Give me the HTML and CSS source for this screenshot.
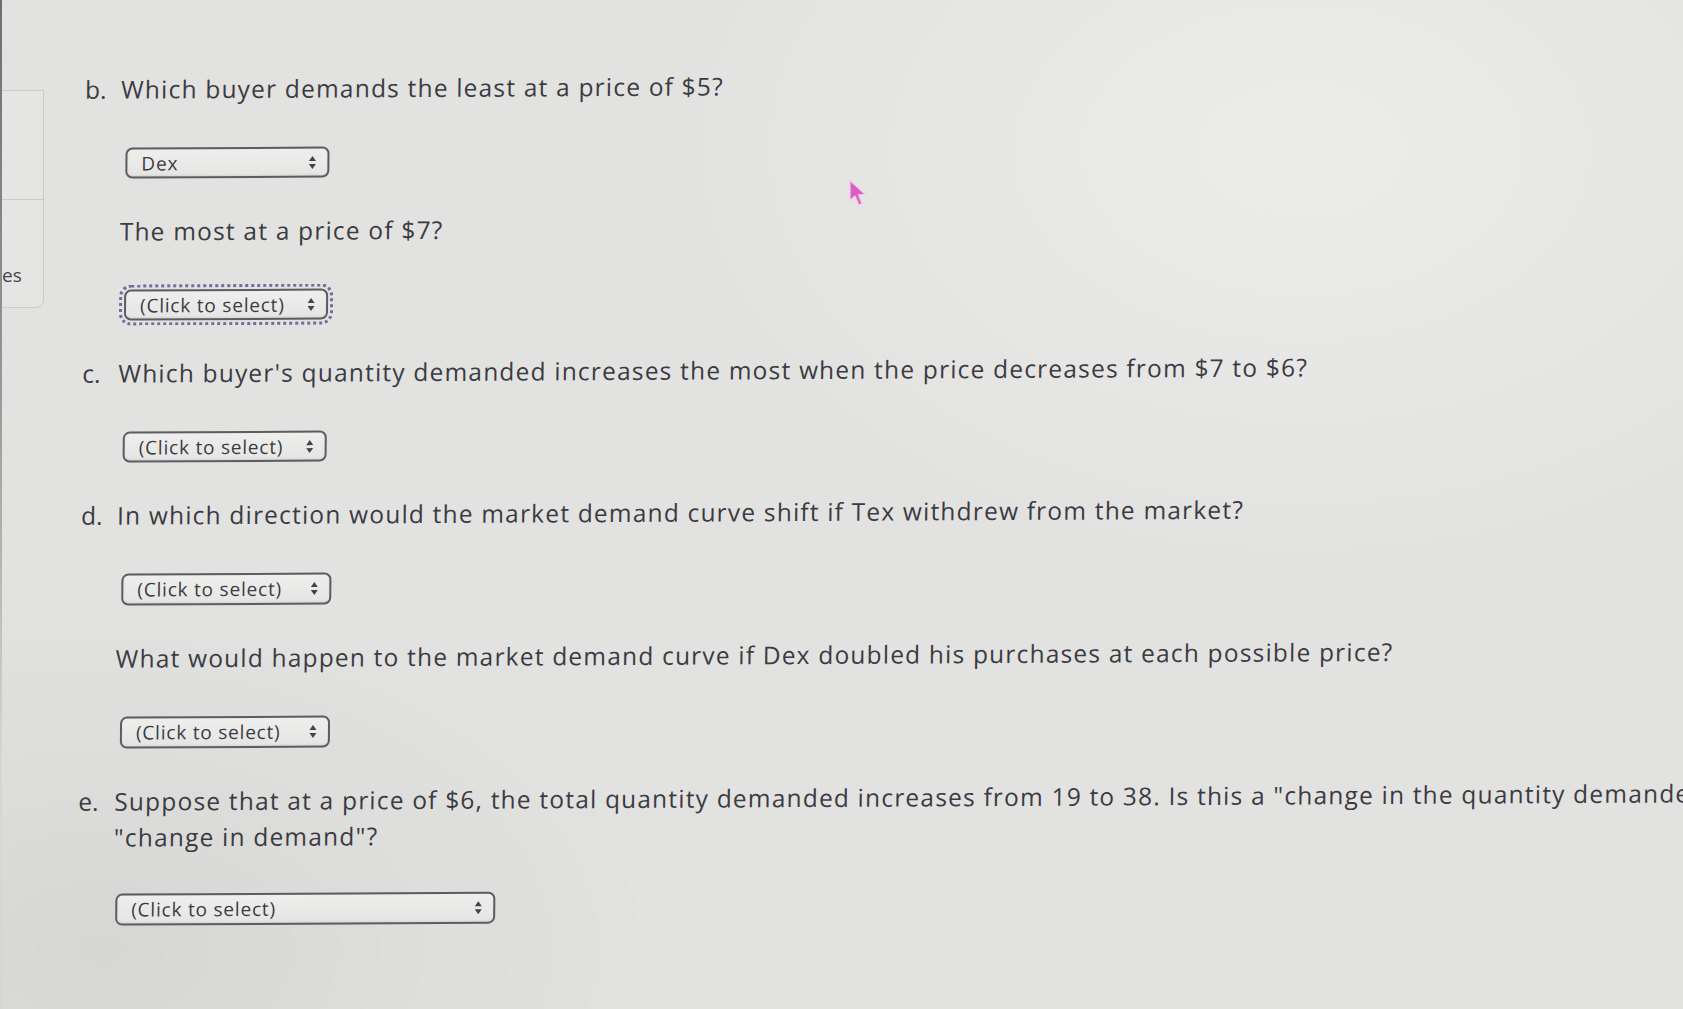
FILE: index.html
```html
<!DOCTYPE html>
<html>
<head>
<meta charset="utf-8">
<link rel="stylesheet" href="styles.css">
</head>
<body>
<div class="screen">
  <aside class="side">
    <div class="side-top"></div>
    <div class="side-bottom"><span class="side-text">es</span></div>
  </aside>
  <main class="main">
    <section class="q">
      <div class="q-row"><span class="q-label">b.</span><span class="q-text">Which buyer demands the least at a price of $5?</span></div>
      <div class="answer"><div class="select"><span class="select-value">Dex</span><span class="arrows"><svg viewBox="0 0 8 14" width="8" height="14"><path d="M4 0.5 L7.5 5.5 L0.5 5.5 Z M4 13.5 L7.5 8.5 L0.5 8.5 Z" fill="#43434f"/></svg></span></div></div>
      <div class="q-row"><span class="q-label"></span><span class="q-text">The most at a price of $7?</span></div>
      <div class="answer"><div class="select focused"><span class="select-value">(Click to select)</span><span class="arrows"><svg viewBox="0 0 8 14" width="8" height="14"><path d="M4 0.5 L7.5 5.5 L0.5 5.5 Z M4 13.5 L7.5 8.5 L0.5 8.5 Z" fill="#43434f"/></svg></span></div></div>
    </section>
    <section class="q">
      <div class="q-row"><span class="q-label">c.</span><span class="q-text">Which buyer's quantity demanded increases the most when the price decreases from $7 to $6?</span></div>
      <div class="answer"><div class="select"><span class="select-value">(Click to select)</span><span class="arrows"><svg viewBox="0 0 8 14" width="8" height="14"><path d="M4 0.5 L7.5 5.5 L0.5 5.5 Z M4 13.5 L7.5 8.5 L0.5 8.5 Z" fill="#43434f"/></svg></span></div></div>
    </section>
    <section class="q">
      <div class="q-row"><span class="q-label">d.</span><span class="q-text">In which direction would the market demand curve shift if Tex withdrew from the market?</span></div>
      <div class="answer"><div class="select medium"><span class="select-value">(Click to select)</span><span class="arrows"><svg viewBox="0 0 8 14" width="8" height="14"><path d="M4 0.5 L7.5 5.5 L0.5 5.5 Z M4 13.5 L7.5 8.5 L0.5 8.5 Z" fill="#43434f"/></svg></span></div></div>
      <div class="q-row"><span class="q-label"></span><span class="q-text">What would happen to the market demand curve if Dex doubled his purchases at each possible price?</span></div>
      <div class="answer"><div class="select medium"><span class="select-value">(Click to select)</span><span class="arrows"><svg viewBox="0 0 8 14" width="8" height="14"><path d="M4 0.5 L7.5 5.5 L0.5 5.5 Z M4 13.5 L7.5 8.5 L0.5 8.5 Z" fill="#43434f"/></svg></span></div></div>
    </section>
    <section class="q q-last">
      <div class="q-row"><span class="q-label">e.</span><span class="q-text">Suppose that at a price of $6, the total quantity demanded increases from 19 to 38. Is this a "change in the quantity demanded" or a<br>"change in demand"?</span></div>
      <div class="answer answer-last"><div class="select wide"><span class="select-value">(Click to select)</span><span class="arrows"><svg viewBox="0 0 8 14" width="8" height="14"><path d="M4 0.5 L7.5 5.5 L0.5 5.5 Z M4 13.5 L7.5 8.5 L0.5 8.5 Z" fill="#43434f"/></svg></span></div></div>
    </section>
  </main>
  <div class="cursor"><svg viewBox="0 0 16 24" width="20" height="30"><path d="M1.5 1 L1.5 17.5 L5.6 13.8 L8.6 21 L11.4 19.8 L8.5 12.8 L14 12.4 Z" fill="#d95ec6" stroke="#f2d0ea" stroke-width="1.2" stroke-linejoin="round"/></svg></div>
</div>
</body>
</html>
```

FILE: styles.css
```css
html, body {
  margin: 0;
  padding: 0;
  width: 1683px;
  height: 1009px;
  overflow: hidden;
}

body {
  background: #e3e3e1;
  font-family: "Open Sans", "Liberation Sans", sans-serif;
  color: #3b3b43;
}

.screen {
  position: relative;
  display: flex;
  width: 1683px;
  height: 1009px;
  overflow: hidden;
  background:
    radial-gradient(ellipse 900px 600px at 1300px 150px, rgba(255,255,255,0.35), rgba(255,255,255,0) 70%),
    radial-gradient(ellipse 800px 500px at 100px 950px, rgba(0,0,0,0.05), rgba(0,0,0,0) 70%),
    #e2e2e0;
  border-left: 2px solid #888;
  border-image: linear-gradient(#6e6e6e, #9a9a9a 40%, #d6d6d4 75%) 1;
  box-sizing: border-box;
}

.side {
  flex: 0 0 35px;
  margin-top: 90px;
  height: 216px;
  display: flex;
  flex-direction: column;
  border: 1px solid #cbcbc9;
  border-left: none;
  border-radius: 0 0 8px 0;
  background: rgba(255,255,255,0.12);
}

.side-top {
  height: 108px;
  border-bottom: 1px solid #cbcbc9;
}

.side-bottom {
  flex: 1;
  display: flex;
  justify-content: flex-end;
  padding-right: 21px;
  padding-top: 65px;
  overflow: hidden;
}

.side-text {
  font-size: 19px;
  line-height: 20px;
  color: #46464c;
}

.main {
  flex: 1;
  padding-left: 42px;
  padding-top: 72px;
  min-width: 0;
  transform-origin: 0 0;
  transform: rotate(-0.3deg) skewX(-0.85deg);
}

.q-row {
  display: flex;
  font-size: 24.5px;
  line-height: 36px;
  letter-spacing: 1.2px;
}

.q-label {
  flex: 0 0 36px;
  letter-spacing: 0;
}

.q-text {
  white-space: nowrap;
}

.q-last {
  margin-top: 7px;
}

.answer {
  margin: 40px 0 35px 41px;
}

.answer-last {
  margin-top: 38px;
}

.select {
  display: flex;
  align-items: center;
  justify-content: space-between;
  box-sizing: border-box;
  width: 204px;
  height: 31px;
  padding: 0 11px 0 14px;
  border: 2px solid #5c5c64;
  border-radius: 7px;
  background: linear-gradient(#eeeeec, #e5e5e3);
  box-shadow: inset 0 -1px 2px rgba(0,0,0,0.08);
  font-size: 19px;
  letter-spacing: 0.8px;
  color: #3b3b43;
}

.select.medium {
  width: 210px;
  height: 32px;
}

.select.wide {
  width: 380px;
  height: 32px;
  margin-left: -3px;
}

.select.focused {
  outline: 3px dotted #6c70a0;
  outline-offset: 2px;
}

.select-value {
  line-height: 28px;
}

.arrows {
  display: flex;
  align-items: center;
}

.cursor {
  position: absolute;
  left: 846px;
  top: 179px;
}
```
